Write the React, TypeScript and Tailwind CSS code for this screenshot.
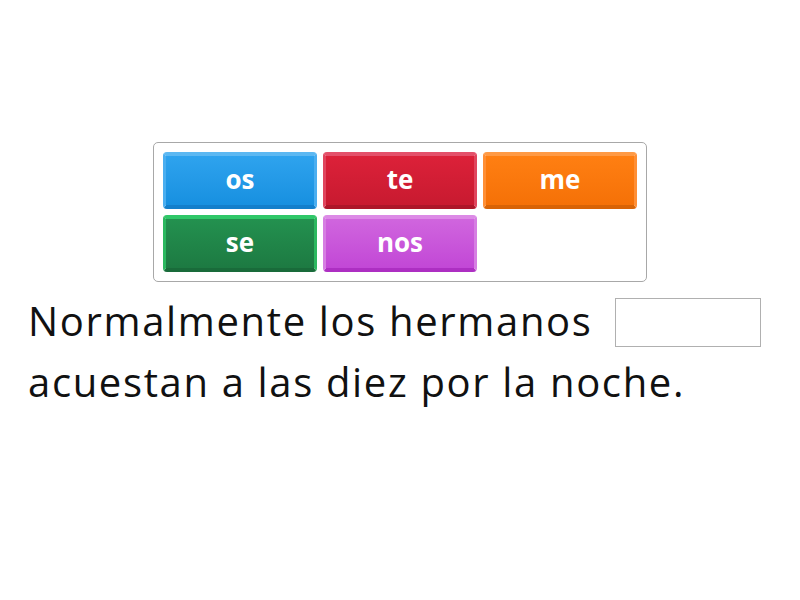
import React from 'react'

type Tile = { label: string; face: string }

// Answer tiles, each with a bevelled face
const tiles: Tile[] = [
  {
    label: 'os',
    face: 'bg-gradient-to-b from-[#2ea3ee] to-[#1790e0] border-t-[#5cb8f2] border-x-[#4aaef0] border-b-[#137fcb]',
  },
  {
    label: 'te',
    face: 'bg-gradient-to-b from-[#dc2139] to-[#c81a30] border-t-[#e4506a] border-x-[#e0455d] border-b-[#ad1629]',
  },
  {
    label: 'me',
    face: 'bg-gradient-to-b from-[#ff7f12] to-[#f57107] border-t-[#ff9a45] border-x-[#ff8f35] border-b-[#d86305]',
  },
  {
    label: 'se',
    face: 'bg-gradient-to-b from-[#23914f] to-[#1d7a42] border-t-[#2fc768] border-x-[#2bb85f] border-b-[#196b3a]',
  },
  {
    label: 'nos',
    face: 'bg-gradient-to-b from-[#d065de] to-[#c247d6] border-t-[#dc8ae6] border-x-[#d67ee2] border-b-[#ad2fc2]',
  },
]

export default function App() {
  return (
    <div
      className="w-[800px] h-[600px] bg-white"
      style={{ fontFamily: '"Open Sans", "Noto Sans", sans-serif' }}
    >
      <div className="pt-[142px] pl-[153px]">
        <div className="w-[494px] rounded-[5px] border border-[#a8a8a8] p-[9px]">
          <div className="grid grid-cols-3 gap-[6px]">
            {tiles.map((t) => (
              <div
                key={t.label}
                className={`h-[57px] rounded-[4px] border-t-[4px] border-x-[3px] border-b-[4px] flex items-center justify-center text-white text-[26px] font-bold leading-none pb-[3px] ${t.face}`}
              >
                {t.label}
              </div>
            ))}
          </div>
        </div>
      </div>

      <div className="pl-[28px] pr-[20px] mt-[8px] text-[40px] leading-[61px] text-[#111] tracking-[1.65px]">
        <span>Normalmente los hermanos </span>
        <span className="inline-block align-middle ml-[10px] w-[146px] h-[49px] border border-[#b0b0b0] relative -top-[3px]" />
        <br />
        <span>acuestan a las diez por la noche.</span>
      </div>
    </div>
  )
}
